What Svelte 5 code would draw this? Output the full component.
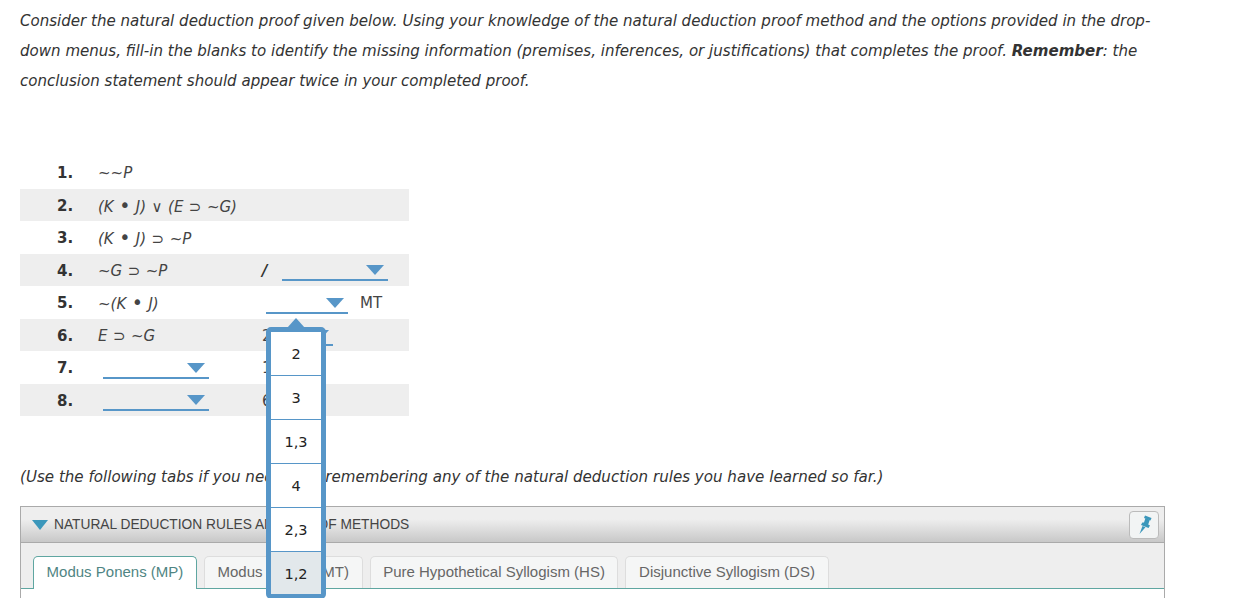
<script>
	const rows = [
		{ n: 1, stmt: ['~~P'] },
		{ n: 2, stmt: ['(K ', ' J) ∨ (E ⊃ ~G)'] },
		{ n: 3, stmt: ['(K ', ' J) ⊃ ~P'] },
		{ n: 4, stmt: ['~G ⊃ ~P'], slash: true, just: { w: 106 } },
		{ n: 5, stmt: ['~(K ', ' J)'], just: { w: 82, gap: 4 }, rule: 'MT' },
		{ n: 6, stmt: ['E ⊃ ~G'], prefix: '2', just: { w: 51 } },
		{ n: 7, pick: true, prefix: '1' },
		{ n: 8, pick: true, prefix: '6' }
	];
	const options = ['2', '3', '1,3', '4', '2,3', '1,2'];
	const tabs = ['Modus Ponens (MP)', 'Modus Tollens (MT)', 'Pure Hypothetical Syllogism (HS)', 'Disjunctive Syllogism (DS)'];
</script>

<div class="page">
	<p class="intro">
		Consider the natural deduction proof given below. Using your knowledge of the natural deduction proof method and the options provided in the drop-down menus, fill-in the blanks to identify the missing information (premises, inferences, or justifications) that completes the proof. <b>Remember</b>: the conclusion statement should appear twice in your completed proof.
	</p>

	<div class="proof">
		{#each rows as r}
			<div class="row">
				<span class="num">{r.n}.</span>
				<span class="stmt">
					{#if r.pick}
						<span class="select" style="width:106px"><i class="arrow"></i></span>
					{:else}
						{r.stmt[0]}{#if r.stmt[1]}<span class="dot">•</span>{r.stmt[1]}{/if}
					{/if}
				</span>
				<span class="just">
					{#if r.slash}<em class="slash">/</em>{/if}
					{#if r.prefix}<span class="prefix">{r.prefix}</span>{/if}
					{#if r.just}
						<span class="select" style="width:{r.just.w}px;margin-left:{r.just.gap ?? 0}px"><i class="arrow"></i></span>
					{/if}
					{#if r.rule}<span class="rule">{r.rule}</span>{/if}
				</span>
			</div>
		{/each}
	</div>

	<p class="hint">(Use the following tabs if you need help remembering any of the natural deduction rules you have learned so far.)</p>

	<div class="panel">
		<div class="panel-head">
			<i class="head-arrow"></i>
			<span>NATURAL DEDUCTION RULES AND PROOF METHODS</span>
			<button class="pin" aria-label="Pin">
				<svg width="17" height="21" viewBox="0 0 17 21">
					<path d="M9 1.5 L15.5 4 L14.5 6.5 L8 4 Z" fill="#3b97bb" />
					<path d="M9.5 4 L13.8 5.8 L12.2 10.5 L14 11.5 L12.5 14 L5 11 L6.3 8.5 L8 8.5 Z" fill="#3b97bb" />
					<path d="M6.5 12 L9.5 13.2 L3.5 20 Z" fill="#3b97bb" />
				</svg>
			</button>
		</div>
		<div class="tabs">
			{#each tabs as t, i}
				<div class="tab" class:active={i === 0}>{t}</div>
			{/each}
		</div>
	</div>

	<div class="menu">
		<i class="menu-tip"></i>
		{#each options as o, i}
			<div class="opt" class:hover={i === options.length - 1}>{o}</div>
		{/each}
	</div>
</div>

<style>
	:global(body) {
		margin: 0;
		background: #fff;
	}

	.page {
		position: relative;
		width: 1248px;
		height: 598px;
		overflow: hidden;
		padding: 6px 20px 0;
		box-sizing: border-box;
		font-family: "DejaVu Sans", Verdana, sans-serif;
		color: #333;
	}

	.intro {
		margin: 0;
		width: 1140px;
		font-size: 15.05px;
		font-style: italic;
		line-height: 30px;
	}

	.proof {
		width: 389px;
		margin-top: 60px;
	}

	.row {
		display: flex;
		align-items: center;
		height: 32.5px;
		padding-top: 2px;
		box-sizing: border-box;
		font-size: 15px;
	}

	.row:nth-child(even) {
		background: #eee;
	}

	.num {
		width: 78px;
		padding-left: 37px;
		box-sizing: border-box;
		font-weight: 700;
		font-size: 15px;
	}

	.stmt {
		width: 164px;
		font-style: italic;
		white-space: nowrap;
		word-spacing: 0.7px;
		color: #444;
	}

	.dot {
		font-style: normal;
		font-size: 19px;
		line-height: 1;
	}

	.just {
		display: flex;
		align-items: center;
		white-space: nowrap;
	}

	.slash {
		width: 20px;
		font-size: 15px;
		font-weight: 700;
	}

	.prefix {
		width: 20px;
		color: #444;
	}

	.rule {
		margin-left: 12px;
		color: #444;
	}

	.select {
		display: inline-flex;
		justify-content: flex-end;
		align-items: flex-start;
		height: 17px;
		margin-top: 4px;
		box-sizing: border-box;
		border-bottom: 2px solid #5796c8;
	}

	.stmt .select {
		margin-left: 5px;
		vertical-align: middle;
	}

	.arrow {
		width: 0;
		height: 0;
		margin: 1px 4px 0 0;
		border-left: 9px solid transparent;
		border-right: 9px solid transparent;
		border-top: 10px solid #5796c8;
	}

	.hint {
		margin: 46px 0 0;
		font-size: 15.1px;
		font-style: italic;
		line-height: 30px;
	}

	.panel {
		width: 1145px;
		height: 120px;
		margin-top: 14px;
		box-sizing: border-box;
		border: 1px solid #aaa;
		border-bottom: 0;
	}

	.panel-head {
		display: flex;
		align-items: center;
		height: 36px;
		box-sizing: border-box;
		padding: 0 5px 0 11px;
		border-bottom: 1px solid #aaa;
		background: linear-gradient(#eee 0%, #eee 35%, #c8c8c8 100%);
		font-family: "Liberation Sans", Arial, sans-serif;
		font-size: 13.75px;
		color: #444;
	}

	.head-arrow {
		width: 0;
		height: 0;
		margin-right: 6px;
		border-left: 8.5px solid transparent;
		border-right: 8.5px solid transparent;
		border-top: 10px solid #3b97bb;
	}

	.pin {
		display: flex;
		align-items: center;
		justify-content: center;
		width: 30px;
		height: 28px;
		margin-left: auto;
		padding: 0;
		border: 1px solid #bbb;
		border-radius: 4px;
		background: #f2f4f4;
	}

	.tabs {
		display: flex;
		gap: 7px;
		height: 46px;
		box-sizing: border-box;
		padding: 13px 0 0 12px;
		background: #eee;
		border-bottom: 1px solid #5fa6a1;
		font-family: "Liberation Sans", Arial, sans-serif;
		font-size: 15px;
	}

	.tab {
		height: 32px;
		box-sizing: border-box;
		padding: 0 12.6px;
		line-height: 30px;
		border: 1px solid #ddd;
		border-bottom: 0;
		border-radius: 5px 5px 0 0;
		background: #f5f6f6;
		color: #666;
	}

	.tab.active {
		height: 33px;
		border-color: #5fa6a1;
		background: #fff;
		color: #4f8583;
	}

	.menu {
		position: absolute;
		left: 266px;
		top: 327px;
		width: 60px;
		box-sizing: border-box;
		border: 5px solid #5796c8;
		border-radius: 5px;
		background: #fff;
		font-size: 14.5px;
		color: #222;
		text-align: center;
	}

	.menu-tip {
		position: absolute;
		left: 16px;
		top: -14px;
		width: 0;
		height: 0;
		border-left: 9px solid transparent;
		border-right: 9px solid transparent;
		border-bottom: 10px solid #5796c8;
	}

	.opt {
		height: 44px;
		box-sizing: border-box;
		line-height: 44px;
		border-bottom: 1px solid #5796c8;
	}

	.opt:last-child {
		height: 42px;
		border-bottom: 0;
	}

	.opt.hover {
		background: #e2e8eb;
	}
</style>
